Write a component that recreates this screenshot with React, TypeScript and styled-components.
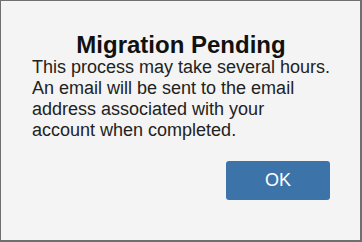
import styled, { createGlobalStyle } from "styled-components";

const GlobalStyle = createGlobalStyle`
    html, body {
        margin: 0;
        padding: 0;
        background: #f4f4f4;
    }
    * {
        box-sizing: border-box;
    }
`;

const Dialog = styled.div`
    width: 362px;
    height: 242px;
    background: #f4f4f4;
    border-style: solid;
    border-color: #6f6f6f;
    border-width: 1px 2px 2px 1px;
    padding: 32px 30px 0 31px;
    font-family: "Liberation Sans", Arial, sans-serif;
    display: flex;
    flex-direction: column;
`;

const Title = styled.h1`
    margin: 0;
    font-size: 24px;
    line-height: 24px;
    font-weight: bold;
    color: #111;
    text-align: center;
`;

const Message = styled.p`
    margin: 0;
    width: 299px;
    font-size: 18px;
    line-height: 21px;
    color: #222;
`;

const Actions = styled.div`
    display: flex;
    justify-content: flex-end;
    margin-top: 20px;
`;

const Button = styled.button`
    width: 104px;
    height: 39px;
    border: none;
    border-radius: 3px;
    background: #3c74aa;
    color: #fff;
    font-family: "Liberation Sans", Arial, sans-serif;
    font-size: 18px;
    cursor: pointer;
`;

const App = () => {
    return (
        <>
            <GlobalStyle />
            <Dialog>
                <Title>Migration Pending</Title>
                <Message>
                    This process may take several hours. An email will be sent to the email address associated with your account when completed.
                </Message>
                <Actions>
                    <Button>OK</Button>
                </Actions>
            </Dialog>
        </>
    );
};

export default App;
